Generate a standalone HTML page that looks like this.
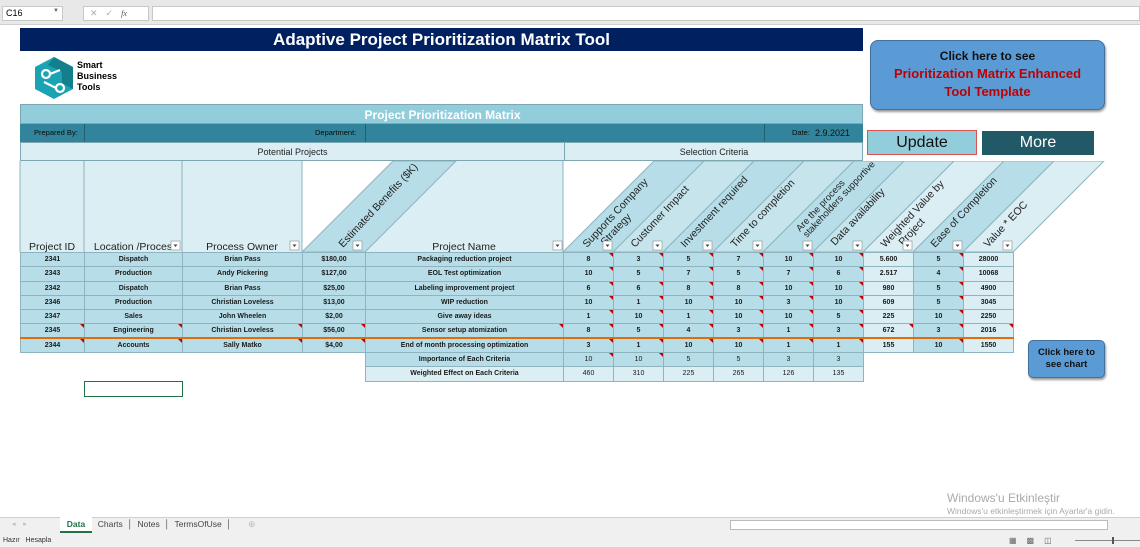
<!DOCTYPE html>
<html><head><meta charset="utf-8"><style>
*{margin:0;padding:0;box-sizing:border-box}
body{width:1140px;height:547px;position:relative;background:#fff;font-family:"Liberation Sans",sans-serif;overflow:hidden}
.a{position:absolute}
table{border-collapse:collapse;table-layout:fixed}
td{border:1px solid #8fb4bf;height:14.3px;font-size:7px;font-weight:bold;text-align:center;color:#1a1a1a;padding:0;position:relative;white-space:nowrap;overflow:hidden}
.l{background:#daeef3}
.m{background:#b7dee8}
.r:after{content:"";position:absolute;right:0;top:0;border-top:4px solid #c00000;border-left:4px solid transparent}
</style></head><body>
<div class="a" style="left:0;top:0;width:1140px;height:25px;background:#e8e8e8;border-bottom:1px solid #d0d0d0"></div>
<div class="a" style="left:2px;top:6px;width:61px;height:15px;background:#fff;border:1px solid #c8c8c8;font-size:9px;padding:1px 3px">C16<span style="float:right;font-size:6px;color:#666">▼</span></div>
<div class="a" style="left:83px;top:6px;width:66px;height:15px;background:#fff;border:1px solid #c8c8c8;font-size:9px;color:#aaa;padding:1px 6px;letter-spacing:8px">✕✓<i style="font-family:'Liberation Serif';color:#555;letter-spacing:0;font-size:8px">fx</i></div>
<div class="a" style="left:152px;top:6px;width:988px;height:15px;background:#fff;border:1px solid #c8c8c8"></div>
<div class="a" style="left:20px;top:28px;width:843px;height:23px;background:#002060;color:#fff;font-weight:bold;font-size:17px;text-align:center;line-height:23px">Adaptive Project Prioritization Matrix Tool</div>
<svg class="a" style="left:34px;top:56px" width="40" height="44" viewBox="0 0 40 44">
<polygon points="20,1 39,11 39,33 20,43 1,33 1,11" fill="#1aa3b3"/>
<polygon points="20,1 39,11 39,33 28,27 28,16 14,9" fill="#137f8c"/>
<circle cx="12" cy="18" r="4" fill="none" stroke="#fff" stroke-width="2.2"/>
<circle cx="26" cy="32" r="4" fill="none" stroke="#fff" stroke-width="2.2"/>
<path d="M16 18 L26 14 M22 32 L10 26" stroke="#fff" stroke-width="2.2"/>
</svg>
<div class="a" style="left:77px;top:60px;font-size:9px;font-weight:900;line-height:11px;color:#000">Smart<br>Business<br>Tools</div>
<div class="a" style="left:870px;top:40px;width:235px;height:70px;background:#5b9bd5;border:1px solid #41719c;border-radius:8px;box-shadow:1px 2px 2px #999;text-align:center;font-weight:bold;font-size:12px;line-height:17px;padding-top:7px;color:#111">Click here to see<br><span style="color:#c00000;font-size:13px">Prioritization Matrix Enhanced<br>Tool Template</span></div>
<div class="a" style="left:20px;top:104px;width:843px;height:20px;background:#92cddc;color:#fff;font-weight:bold;font-size:12px;line-height:20px;border:1px solid #7fa7b2"><span class="a" style="left:0;width:843px;text-align:center;padding-left:0">Project Prioritization Matrix</span></div>
<div class="a" style="left:20px;top:124px;width:843px;height:18px;background:#31849b;font-size:7.5px;color:#0a0a0a;line-height:18px">
<span class="a" style="left:14px">Prepared By:</span><span class="a" style="left:64px;top:0;height:18px;border-left:1px solid #245f70"></span>
<span class="a" style="left:295px">Department:</span><span class="a" style="left:345px;top:0;height:18px;border-left:1px solid #245f70"></span>
<span class="a" style="left:744px;top:0;height:18px;border-left:1px solid #245f70"></span>
<span class="a" style="left:772px">Date:</span><span class="a" style="left:795px;font-size:9px;color:#111">2.9.2021</span></div>
<div class="a" style="left:20px;top:142px;width:843px;height:19px;background:#daeef3;border:1px solid #7fa7b2;font-size:9px;line-height:18px;color:#222">
<span class="a" style="left:0;width:543px;text-align:center">Potential Projects</span><span class="a" style="left:543px;top:0;height:18px;border-left:1px solid #7fa7b2"></span><span class="a" style="left:543px;width:300px;text-align:center">Selection Criteria</span></div>
<div class="a" style="left:867px;top:130px;width:110px;height:25px;background:#92cddc;border:1px solid #d9534f;font-size:16px;text-align:center;line-height:23px;color:#111">Update</div>
<div class="a" style="left:982px;top:131px;width:112px;height:24px;background:#215967;font-size:16px;text-align:center;line-height:23px;color:#fff">More</div>
<svg class="a" style="left:0;top:161px" width="1140" height="92" viewBox="0 161 1140 92">
<rect x="20" y="161" width="282" height="91" fill="#daeef3"/>
<polygon points="365,252 563,252 563,161 456,161" fill="#daeef3"/>
<g stroke="#8fb4bf" stroke-width="1">
<line x1="20" y1="161" x2="20" y2="252"/><line x1="84" y1="161" x2="84" y2="252"/><line x1="182" y1="161" x2="182" y2="252"/><line x1="302" y1="161" x2="302" y2="252"/>
</g>
<polygon points="302,252 365,252 456,161 393,161" fill="#b7dee8" stroke="#8fb4bf"/>
<g stroke="#8fb4bf" stroke-width="1">
<polygon points="563,252 613,252 704,161 654,161" fill="#b7dee8"/>
<polygon points="613,252 663,252 754,161 704,161" fill="#c5e4ec"/>
<polygon points="663,252 713,252 804,161 754,161" fill="#b7dee8"/>
<polygon points="713,252 763,252 854,161 804,161" fill="#c5e4ec"/>
<polygon points="763,252 813,252 904,161 854,161" fill="#b7dee8"/>
<polygon points="813,252 863,252 954,161 904,161" fill="#c5e4ec"/>
<polygon points="863,252 913,252 1004,161 954,161" fill="#daeef3"/>
<polygon points="913,252 963,252 1054,161 1004,161" fill="#b7dee8"/>
<polygon points="963,252 1013,252 1104,161 1054,161" fill="#daeef3"/>
</g>
<line x1="563" y1="161" x2="563" y2="252" stroke="#8fb4bf"/>
<g font-family="Liberation Sans" font-size="10.5" fill="#222">
<text x="52" y="250" text-anchor="middle">Project ID</text>
<text x="133" y="250" text-anchor="middle">Location /Proces</text>
<text x="242" y="250" text-anchor="middle">Process Owner</text>
<text x="464" y="250" text-anchor="middle">Project Name</text>
<text transform="translate(343,248) rotate(-47)">Estimated Benefits ($K)</text>
<text transform="translate(587,248) rotate(-47)">Supports Company</text>
<text transform="translate(605,246) rotate(-47)">Strategy</text>
<text transform="translate(635,248) rotate(-47)">Customer Impact</text>
<text transform="translate(685,248) rotate(-47)">Investment required</text>
<text transform="translate(735,248) rotate(-47)">Time to completion</text>
<text transform="translate(800,232) rotate(-47)" font-size="9.5">Are the process</text>
<text transform="translate(807,238) rotate(-47)" font-size="9.5">stakeholders supportive</text>
<text transform="translate(835,246) rotate(-47)">Data availability</text>
<text transform="translate(885,248) rotate(-47)">Weighted Value by</text>
<text transform="translate(903,246) rotate(-47)">Project</text>
<text transform="translate(935,248) rotate(-47)">Ease of Completion</text>
<text transform="translate(988,248) rotate(-47)">Value * EOC</text>
</g>
<g id="fb">
<g fill="#fff" stroke="#999" stroke-width="0.7">
<rect x="171" y="241" width="9" height="9"/><rect x="290" y="241" width="9" height="9"/><rect x="353" y="241" width="9" height="9"/><rect x="553" y="241" width="9" height="9"/>
<rect x="603" y="241" width="9" height="9"/><rect x="653" y="241" width="9" height="9"/><rect x="703" y="241" width="9" height="9"/><rect x="753" y="241" width="9" height="9"/><rect x="803" y="241" width="9" height="9"/><rect x="853" y="241" width="9" height="9"/><rect x="903" y="241" width="9" height="9"/><rect x="953" y="241" width="9" height="9"/><rect x="1003" y="241" width="9" height="9"/>
</g>
<g fill="#444">
<path d="M173.5 244.5h4l-2 2.5z"/><path d="M292.5 244.5h4l-2 2.5z"/><path d="M355.5 244.5h4l-2 2.5z"/><path d="M555.5 244.5h4l-2 2.5z"/>
<path d="M605.5 244.5h4l-2 2.5z"/><path d="M655.5 244.5h4l-2 2.5z"/><path d="M705.5 244.5h4l-2 2.5z"/><path d="M755.5 244.5h4l-2 2.5z"/><path d="M805.5 244.5h4l-2 2.5z"/><path d="M855.5 244.5h4l-2 2.5z"/><path d="M905.5 244.5h4l-2 2.5z"/><path d="M955.5 244.5h4l-2 2.5z"/><path d="M1005.5 244.5h4l-2 2.5z"/>
</g>
</g>
</svg>
<table class="a" style="left:20px;top:252px;width:993px">
<colgroup><col style="width:64px"><col style="width:98px"><col style="width:120px"><col style="width:63px"><col style="width:198px"><col style="width:50px"><col style="width:50px"><col style="width:50px"><col style="width:50px"><col style="width:50px"><col style="width:50px"><col style="width:50px"><col style="width:50px"><col style="width:50px"></colgroup>
<tr class="m"><td>2341</td><td>Dispatch</td><td>Brian Pass</td><td>$180,00</td><td>Packaging reduction project</td><td class="r">8</td><td class="r">3</td><td class="r">5</td><td class="r">7</td><td class="r">10</td><td class="r">10</td><td class="l">5.600</td><td class="r">5</td><td class="l">28000</td></tr>
<tr class="m"><td>2343</td><td>Production</td><td>Andy Pickering</td><td>$127,00</td><td>EOL Test optimization</td><td class="r">10</td><td class="r">5</td><td class="r">7</td><td class="r">5</td><td class="r">7</td><td class="r">6</td><td class="l">2.517</td><td class="r">4</td><td class="l">10068</td></tr>
<tr class="m"><td>2342</td><td>Dispatch</td><td>Brian Pass</td><td>$25,00</td><td>Labeling improvement project</td><td class="r">6</td><td class="r">6</td><td class="r">8</td><td class="r">8</td><td class="r">10</td><td class="r">10</td><td class="l">980</td><td class="r">5</td><td class="l">4900</td></tr>
<tr class="m"><td>2346</td><td>Production</td><td>Christian Loveless</td><td>$13,00</td><td>WIP reduction</td><td class="r">10</td><td class="r">1</td><td class="r">10</td><td class="r">10</td><td class="r">3</td><td class="r">10</td><td class="l">609</td><td class="r">5</td><td class="l">3045</td></tr>
<tr class="m"><td>2347</td><td>Sales</td><td>John Wheelen</td><td>$2,00</td><td>Give away ideas</td><td class="r">1</td><td class="r">10</td><td class="r">1</td><td class="r">10</td><td class="r">10</td><td class="r">5</td><td class="l">225</td><td class="r">10</td><td class="l">2250</td></tr>
<tr class="m"><td class="r">2345</td><td class="r">Engineering</td><td class="r">Christian Loveless</td><td class="r">$56,00</td><td class="r">Sensor setup atomization</td><td class="r">8</td><td class="r">5</td><td class="r">4</td><td class="r">3</td><td class="r">1</td><td class="r">3</td><td class="l r">672</td><td class="r">3</td><td class="l r">2016</td></tr>
<tr class="m" style="border-top:2px solid #e26b0a"><td class="r">2344</td><td class="r">Accounts</td><td class="r">Sally Matko</td><td class="r">$4,00</td><td>End of month processing optimization</td><td class="r">3</td><td class="r">1</td><td class="r">10</td><td class="r">10</td><td class="r">1</td><td class="r">1</td><td class="l">155</td><td class="r">10</td><td class="l">1550</td></tr>
</table>
<table class="a" style="left:365px;top:352px;width:498px">
<colgroup><col style="width:198px"><col style="width:50px"><col style="width:50px"><col style="width:50px"><col style="width:50px"><col style="width:50px"><col style="width:50px"></colgroup>
<tr class="m"><td>Importance of Each Criteria</td><td class="r" style="font-weight:normal">10</td><td class="r" style="font-weight:normal">10</td><td style="font-weight:normal">5</td><td style="font-weight:normal">5</td><td style="font-weight:normal">3</td><td style="font-weight:normal">3</td></tr>
<tr class="l"><td>Weighted Effect on Each Criteria</td><td style="font-weight:normal">460</td><td style="font-weight:normal">310</td><td style="font-weight:normal">225</td><td style="font-weight:normal">265</td><td style="font-weight:normal">126</td><td style="font-weight:normal">135</td></tr>
</table>
<div class="a" style="left:1028px;top:340px;width:77px;height:38px;background:#5b9bd5;border:1px solid #41719c;border-radius:5px;box-shadow:1px 2px 2px #999;font-size:9.5px;font-weight:bold;text-align:center;line-height:12px;padding-top:6px;color:#111">Click here to<br>see chart</div>
<div class="a" style="left:84px;top:381px;width:99px;height:16px;border:1.5px solid #217346"></div>
<div class="a" style="left:947px;top:491px;font-size:12px;color:#aaa">Windows'u Etkinleştir</div>
<div class="a" style="left:947px;top:506px;font-size:8.5px;color:#aaa">Windows'u etkinleştirmek için Ayarlar'a gidin.</div>
<div class="a" style="left:0;top:517px;width:1140px;height:16px;background:#f0f0f0;border-top:1px solid #d0d0d0"></div>
<div class="a" style="left:12px;top:520px;font-size:7px;color:#bbb">◂ &nbsp;&nbsp; ▸</div>
<div class="a" style="left:60px;top:517px;width:32px;height:16px;background:#fff;border-bottom:2px solid #217346;font-size:8.5px;font-weight:bold;color:#217346;text-align:center;line-height:14px">Data</div>
<div class="a" style="left:93px;top:519px;font-size:8.5px;color:#444">&nbsp;&nbsp;Charts &nbsp;│ &nbsp;Notes &nbsp;│ &nbsp;TermsOfUse &nbsp;│</div>
<div class="a" style="left:248px;top:519px;font-size:9px;color:#bbb">⊕</div>
<div class="a" style="left:730px;top:520px;width:378px;height:10px;background:#fff;border:1px solid #bbb"></div>
<div class="a" style="left:0;top:533px;width:1140px;height:14px;background:#f0f0f0;font-size:7px;color:#333;padding:4px 3px">Hazır &nbsp;&nbsp;Hesapla</div>
<div class="a" style="left:1009px;top:536px;font-size:8px;color:#666;letter-spacing:10px">▦▩◫</div>
<div class="a" style="left:1075px;top:540px;width:65px;height:1px;background:#888"></div>
<div class="a" style="left:1112px;top:537px;width:2px;height:7px;background:#555"></div>
</body></html>
